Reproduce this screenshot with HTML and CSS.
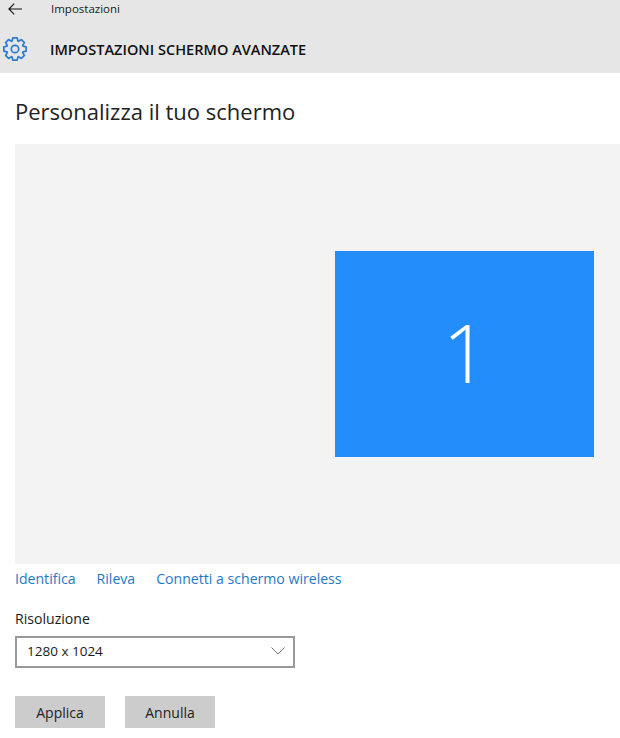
FILE: index.html
```html
<!DOCTYPE html>
<html lang="it">
<head>
    <meta charset="UTF-8">
    <title>Impostazioni</title>
    <link rel="stylesheet" href="styles.css">
</head>
<body>
    <header class="header">
        <div class="title-bar">
            <svg class="back-icon" width="14" height="12" viewBox="0 0 14 12" fill="none" stroke="#111" stroke-width="1.1">
                <path d="M14 6H1M6.2 .7 .9 6l5.3 5.3"/>
            </svg>
            <span class="app-name">Impostazioni</span>
        </div>
        <div class="page-bar">
            <svg class="gear-icon" width="24" height="24" viewBox="0 0 24 24" fill="none" stroke="#2b7cd3" stroke-width="1.7" stroke-linejoin="round">
                <circle cx="12" cy="12" r="3.7"/>
                <path d="M9.09 4.01 9.81 .9H14.19L14.91 4.01 15.59 4.3 18.43 2.6 21.4 5.57 19.7 8.41 19.99 9.09 23.1 9.81V14.19L19.99 14.91 19.7 15.59 21.4 18.43 18.43 21.4 15.59 19.7 14.91 19.99 14.19 23.1H9.81L9.09 19.99 8.41 19.7 5.57 21.4 2.6 18.43 4.3 15.59 4.01 14.91 .9 14.19V9.81L4.01 9.09 4.3 8.41 2.6 5.57 5.57 2.6 8.41 4.3Z"/>
            </svg>
            <h2 class="page-title">IMPOSTAZIONI SCHERMO AVANZATE</h2>
        </div>
    </header>

    <main class="content">
        <h1 class="heading">Personalizza il tuo schermo</h1>

        <div class="preview">
            <div class="monitor">1</div>
        </div>

        <div class="links">
            <a href="#">Identifica</a>
            <a href="#">Rileva</a>
            <a href="#">Connetti a schermo wireless</a>
        </div>

        <label class="field-label">Risoluzione</label>
        <div class="select">
            <span>1280 x 1024</span>
            <svg width="14" height="8" viewBox="0 0 14 8" fill="none" stroke="#777" stroke-width="1">
                <path d="M.5.5 7 7 13.5.5"/>
            </svg>
        </div>

        <div class="buttons">
            <button class="btn">Applica</button>
            <button class="btn">Annulla</button>
        </div>
    </main>
</body>
</html>
```

FILE: styles.css
```css
body { margin: 0; background: #fff; color: #1a1a1a; font-family: "Open Sans", "Noto Sans", Arial, sans-serif; font-size: 14px; overflow: hidden; }
.header { height: 73px; background-color: #e6e6e6; }
.title-bar { display: flex; align-items: center; height: 17px; padding-left: 8px; }
.back-icon { margin-right: 29px; }
.app-name { font-size: 11.5px; }
.page-bar { display: flex; align-items: center; height: 32px; margin-top: 16px; padding-left: 3px; }
.gear-icon { margin-right: 23px; }
.page-title { margin: 0; font-size: 14.55px; font-weight: 600; color: #111; }
.content { padding: 0 0 0 15px; }
.heading { margin: 0; padding-top: 24px; height: 47px; font-size: 22px; font-weight: 400; line-height: 29px; color: #222; }
.preview { display: flex; align-items: center; justify-content: flex-end; height: 420px; padding-right: 26px; background-color: #f3f3f3; }
.monitor { display: flex; align-items: center; justify-content: center; box-sizing: border-box; width: 259px; height: 206px; padding: 0 0 6px 2px; background-color: #228dfb; color: #fff; font-size: 81px; font-weight: 300; }
.links { display: flex; gap: 21px; margin-top: 5px; font-size: 14.1px; line-height: 19px; }
.links a { color: #1f78c8; text-decoration: none; }
.field-label { display: block; margin-top: 21px; font-size: 14.1px; line-height: 19px; }
.select { display: flex; align-items: center; justify-content: space-between; box-sizing: border-box; width: 280px; height: 32px; margin-top: 8px; padding: 0 8px 2px 10px; border: 2px solid #999; font-size: 13.5px; }
.buttons { display: flex; gap: 20px; margin-top: 28px; }
.btn { width: 90px; height: 32px; padding: 0; border: none; background-color: #ccc; color: #222; font-family: inherit; font-size: 14px; }
```
